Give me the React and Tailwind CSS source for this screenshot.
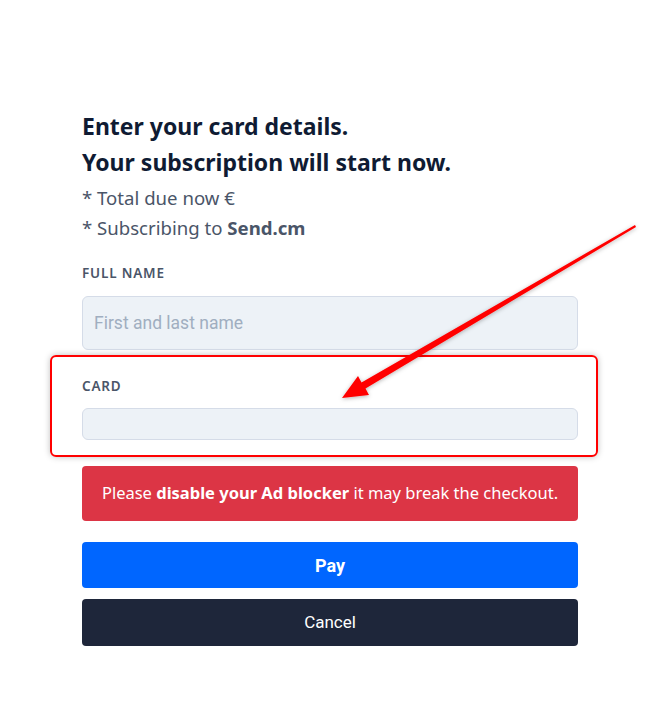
import React from "react";

export default function App() {
  return (
    <div className="relative w-[646px] h-[713px] bg-white overflow-hidden" style={{ fontFamily: '"Noto Sans", "Open Sans", sans-serif' }}>
      <div className="ml-[82px] w-[496px] pt-[108px] flex flex-col">
        <h1 className="text-[23px] leading-[36px] font-bold text-[#0f1b33]">Enter your card details.</h1>
        <h2 className="text-[23px] leading-[36px] font-bold text-[#0f1b33]">Your subscription will start now.</h2>
        <p className="mt-[3px] text-[18.6px] leading-[30px] text-[#4a5568]">* Total due now €</p>
        <p className="text-[18.6px] leading-[30px] text-[#4a5568]">
          * Subscribing to <span className="font-bold">Send.cm</span>
        </p>
        <label className="mt-[20px] text-[13.5px] leading-[20px] font-semibold tracking-[0.06em] text-[#4a5568]">FULL NAME</label>
        <div className="mt-[13px] h-[54px] rounded-[6px] border border-[#d5dce8] bg-[#edf2f7] flex items-center px-[11px]">
          <span className="text-[17.5px] text-[#a0aec0]" style={{ fontFamily: 'Roboto, sans-serif' }}>First and last name</span>
        </div>
        <label className="mt-[26px] text-[13.5px] leading-[20px] font-semibold tracking-[0.06em] text-[#4a5568]">CARD</label>
        <div className="mt-[12px] h-[32px] rounded-[6px] border border-[#d5dce8] bg-[#edf2f7]"></div>
        <div className="mt-[26px] h-[55px] rounded-[4px] bg-[#dc3545] flex items-center justify-center text-white text-[16.5px]">
          <span>Please <span className="font-bold">disable your Ad blocker</span> it may break the checkout.</span>
        </div>
        <button className="mt-[21px] h-[46px] rounded-[4px] bg-[#0066ff] text-white text-[18px] font-bold" style={{ fontFamily: 'Roboto, sans-serif' }}>Pay</button>
        <button className="mt-[11px] h-[47px] rounded-[4px] bg-[#1e263a] text-white text-[17px]" style={{ fontFamily: 'Roboto, sans-serif' }}>Cancel</button>
      </div>

      <div className="absolute left-[50px] top-[355px] w-[548px] h-[102px] rounded-[6px] border-2 border-[#ff0000] shadow-[0_0_6px_rgba(0,0,0,0.25)] pointer-events-none"></div>

      <svg className="absolute left-0 top-0 pointer-events-none" width="646" height="713" viewBox="0 0 646 713">
        <defs>
          <filter id="sh" x="-10%" y="-10%" width="120%" height="120%">
            <feDropShadow dx="0" dy="1" stdDeviation="2" floodColor="#000" floodOpacity="0.3" />
          </filter>
        </defs>
        <polygon
          filter="url(#sh)"
          fill="#ff0000"
          points="635,225 636,227 365.5,388.5 369,395 342,398 358,376 361.5,382.5"
        />
      </svg>
    </div>
  );
}
